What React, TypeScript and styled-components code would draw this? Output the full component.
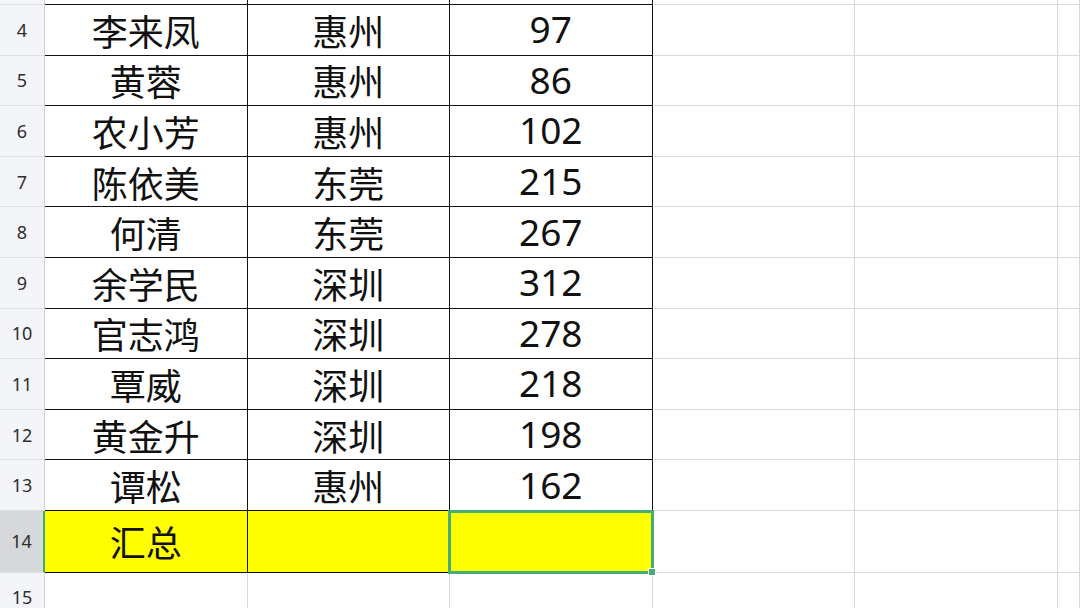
import React from "react";
import styled, { createGlobalStyle } from "styled-components";

const Global = createGlobalStyle`
  html, body { margin: 0; padding: 0; background: #ffffff; overflow: hidden; }
  #root { width: 1080px; height: 608px; overflow: hidden; }
`;

const COLS = "45px 202.5px 202.5px 202.5px 202.5px 202.5px 1fr";

const Sheet = styled.div`
  width: 1080px;
  height: 608px;
  display: flex;
  flex-direction: column;
  background: #ffffff;
  font-family: "Noto Sans CJK SC", "Noto Sans", sans-serif;
`;

const Row = styled.div<{ $h: number }>`
  display: grid;
  grid-template-columns: ${COLS};
  height: ${(p) => p.$h}px;
  flex: none;
`;

const Header = styled.div<{ $active?: boolean }>`
  box-sizing: border-box;
  display: flex;
  align-items: center;
  justify-content: center;
  background: ${(p) => (p.$active ? "#d6d8db" : "#f3f5f8")};
  border-bottom: 1px solid #dcdee2;
  border-right: ${(p) => (p.$active ? "2px solid #3fae6c" : "1px solid #d0d2d6")};
  font-family: "Noto Sans", "Open Sans", sans-serif;
  font-size: 18px;
  color: #2e2e2e;
`;

const Cell = styled.div<{ $table?: boolean; $fill?: boolean; $num?: boolean }>`
  position: relative;
  box-sizing: border-box;
  display: flex;
  align-items: center;
  justify-content: center;
  background: ${(p) => (p.$fill ? "#ffff00" : "#ffffff")};
  border-right: 1px solid ${(p) => (p.$table ? "#111111" : "#d9d9d9")};
  border-bottom: 1px solid ${(p) => (p.$table ? "#111111" : "#d9d9d9")};
  font-family: ${(p) =>
    p.$num ? `"Noto Sans", "Noto Sans CJK SC", sans-serif` : `"Noto Sans CJK SC", sans-serif`};
  font-size: ${(p) => (p.$num ? "37px" : "36px")};
  color: #111111;
  line-height: 1;
  padding-bottom: ${(p) => (p.$num ? "2px" : "0")};
`;

const Selection = styled.div`
  position: absolute;
  z-index: 2;
  left: -2px;
  top: -1px;
  right: -2px;
  bottom: -2px;
  border: 3px solid #45ad77;
  pointer-events: none;
`;

const Handle = styled.div`
  position: absolute;
  right: -5px;
  bottom: -5px;
  width: 6px;
  height: 6px;
  background: #45ad77;
  border: 1px solid #ffffff;
`;

type Rec = { n: number; name: string; city: string; v: string };

const data: Rec[] = [
  { n: 4, name: "李来凤", city: "惠州", v: "97" },
  { n: 5, name: "黄蓉", city: "惠州", v: "86" },
  { n: 6, name: "农小芳", city: "惠州", v: "102" },
  { n: 7, name: "陈依美", city: "东莞", v: "215" },
  { n: 8, name: "何清", city: "东莞", v: "267" },
  { n: 9, name: "余学民", city: "深圳", v: "312" },
  { n: 10, name: "官志鸿", city: "深圳", v: "278" },
  { n: 11, name: "覃威", city: "深圳", v: "218" },
  { n: 12, name: "黄金升", city: "深圳", v: "198" },
  { n: 13, name: "谭松", city: "惠州", v: "162" },
];

const Blank = () => (
  <>
    <Cell />
    <Cell />
    <Cell />
  </>
);

export default function App() {
  return (
    <>
      <Global />
      <Sheet>
        <Row $h={5}>
          <Header />
          <Cell $table />
          <Cell $table />
          <Cell $table />
          <Blank />
        </Row>
        {data.map((r) => (
          <Row key={r.n} $h={50.6}>
            <Header>{r.n}</Header>
            <Cell $table>{r.name}</Cell>
            <Cell $table>{r.city}</Cell>
            <Cell $table $num>
              {r.v}
            </Cell>
            <Blank />
          </Row>
        ))}
        <Row $h={62}>
          <Header $active>14</Header>
          <Cell $table $fill>
            汇总
          </Cell>
          <Cell $table $fill />
          <Cell $table $fill $num>
            <Selection>
              <Handle />
            </Selection>
          </Cell>
          <Blank />
        </Row>
        <Row $h={50}>
          <Header>15</Header>
          <Cell />
          <Cell />
          <Cell />
          <Blank />
        </Row>
      </Sheet>
    </>
  );
}
